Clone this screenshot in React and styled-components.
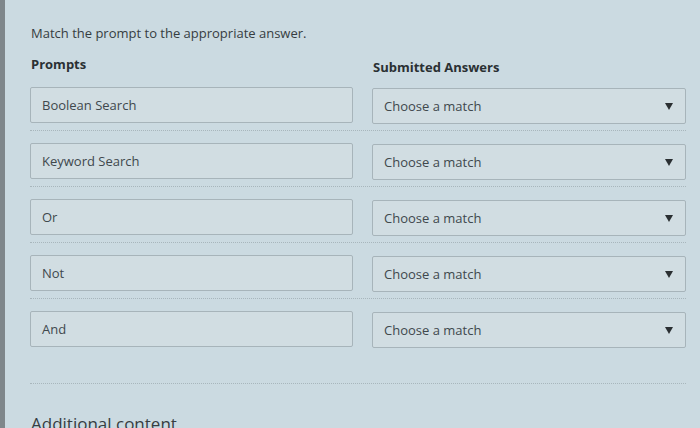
import React from "react";
import styled, { createGlobalStyle } from "styled-components";

const GlobalStyle = createGlobalStyle`
  html, body {
    margin: 0;
    padding: 0;
    height: 100%;
    background: #cbdae1;
    font-family: "Open Sans", "Liberation Sans", sans-serif;
  }
`;

const Page = styled.div`
  height: 428px;
  overflow: hidden;
  border-left: 5px solid #7f878b;
  background: #cbdae1;
  padding: 24px 14px 0 25px;
  box-sizing: border-box;
`;

const Intro = styled.p`
  margin: 0 0 13px 1px;
  font-size: 13px;
  color: #363d41;
  line-height: 18px;
`;

const Grid = styled.div`
  display: grid;
  grid-template-columns: 323px 314px;
  column-gap: 19px;
  width: 656px;
`;

const ColHead = styled.div`
  font-size: 13px;
  font-weight: 700;
  color: #2a3033;
  line-height: 18px;
  padding-left: 1px;
  padding-top: ${(p) => p.$shift || 0}px;
  margin-bottom: ${(p) => 14 - (p.$shift || 0)}px;
`;

const Box = styled.div`
  height: 36px;
  box-sizing: border-box;
  border: 1px solid #a7b4ba;
  border-radius: 2px;
  background: #d1dde2;
  display: flex;
  align-items: center;
  justify-content: space-between;
  padding: 0 12px 0 11px;
  font-size: 13px;
  color: #40484d;
  margin-top: ${(p) => (p.$right ? 1 : 0)}px;
  margin-bottom: ${(p) => (p.$right ? -1 : 0)}px;
`;

const Sep = styled.div`
  grid-column: 1 / 3;
  height: 0;
  border-top: 1px dotted #a8b6bc;
  margin: 7px 0 12px;
`;

const Spacer = styled.div`
  grid-column: 1 / 3;
  height: 36px;
  border-bottom: 1px dotted #a8b6bc;
`;

const Caret = styled.span`
  width: 0;
  height: 0;
  border-left: 4.5px solid transparent;
  border-right: 4.5px solid transparent;
  border-top: 7px solid #2a2f32;
`;

const More = styled.h2`
  margin: 28px 0 0 1px;
  font-size: 17px;
  font-weight: 400;
  color: #363d41;
`;

const prompts = ["Boolean Search", "Keyword Search", "Or", "Not", "And"];

export default function App() {
  return (
    <>
      <GlobalStyle />
      <Page>
        <Intro>Match the prompt to the appropriate answer.</Intro>
        <Grid>
          <ColHead>Prompts</ColHead>
          <ColHead $shift={3}>Submitted Answers</ColHead>
          {prompts.map((p, i) => (
            <React.Fragment key={p}>
              <Box>{p}</Box>
              <Box $right>
                Choose a match
                <Caret />
              </Box>
              {i < prompts.length - 1 ? <Sep /> : <Spacer />}
            </React.Fragment>
          ))}
        </Grid>
        <More>Additional content</More>
      </Page>
    </>
  );
}
